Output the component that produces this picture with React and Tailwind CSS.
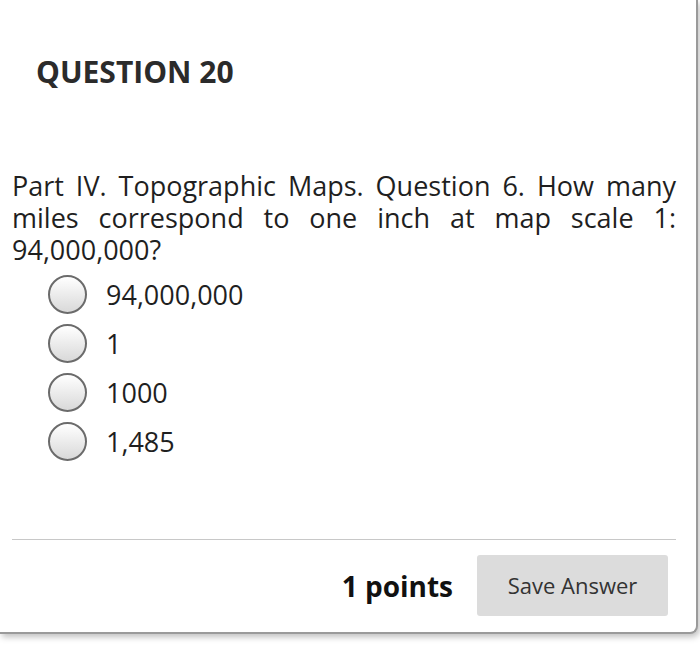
import React from "react";

const options = ["94,000,000", "1", "1000", "1,485"];

function Radio() {
  return (
    <span className="block w-[39px] h-[39px] rounded-full border-2 border-[#6b6b6b] bg-gradient-to-b from-white to-[#d9d9d9]" />
  );
}

export default function App() {
  return (
    <div
      className="w-[700px] h-[645px] bg-white overflow-hidden"
      style={{ fontFamily: '"Open Sans", "Noto Sans", sans-serif' }}
    >
      <div className="w-[698px] h-[634px] bg-white border-r-2 border-b-2 border-[#9a9a9a] rounded-br-[8px] shadow-[2px_3px_6px_rgba(0,0,0,0.25)] flex flex-col pl-3 pr-5">
        <h2 className="mt-[52px] pl-6 text-[30px] leading-[40px] font-bold text-[#2b2b2b]">
          QUESTION 20
        </h2>

        <p className="mt-[78px] text-[27px] leading-[32px] text-[#1f1f1f] text-justify">
          Part IV. Topographic Maps. Question 6. How many miles correspond to one inch at map scale 1: 94,000,000?
        </p>

        <ul className="mt-[9px] flex flex-col gap-[10px]">
          {options.map((o) => (
            <li key={o} className="flex items-center gap-[19px] pl-[36px]">
              <Radio />
              <span className="text-[27px] leading-[39px] text-[#1f1f1f]">{o}</span>
            </li>
          ))}
        </ul>

        <div className="mt-[78px] border-t border-[#c8c8c8]" />

        <div className="mt-[15px] flex items-center justify-end">
          <span className="text-[28px] font-bold text-[#111] mr-[24px]">1 points</span>
          <button className="w-[191px] h-[61px] bg-[#dcdcdc] rounded-[3px] text-[22px] text-[#333] mr-[8px]">
            Save Answer
          </button>
        </div>
      </div>
    </div>
  );
}
